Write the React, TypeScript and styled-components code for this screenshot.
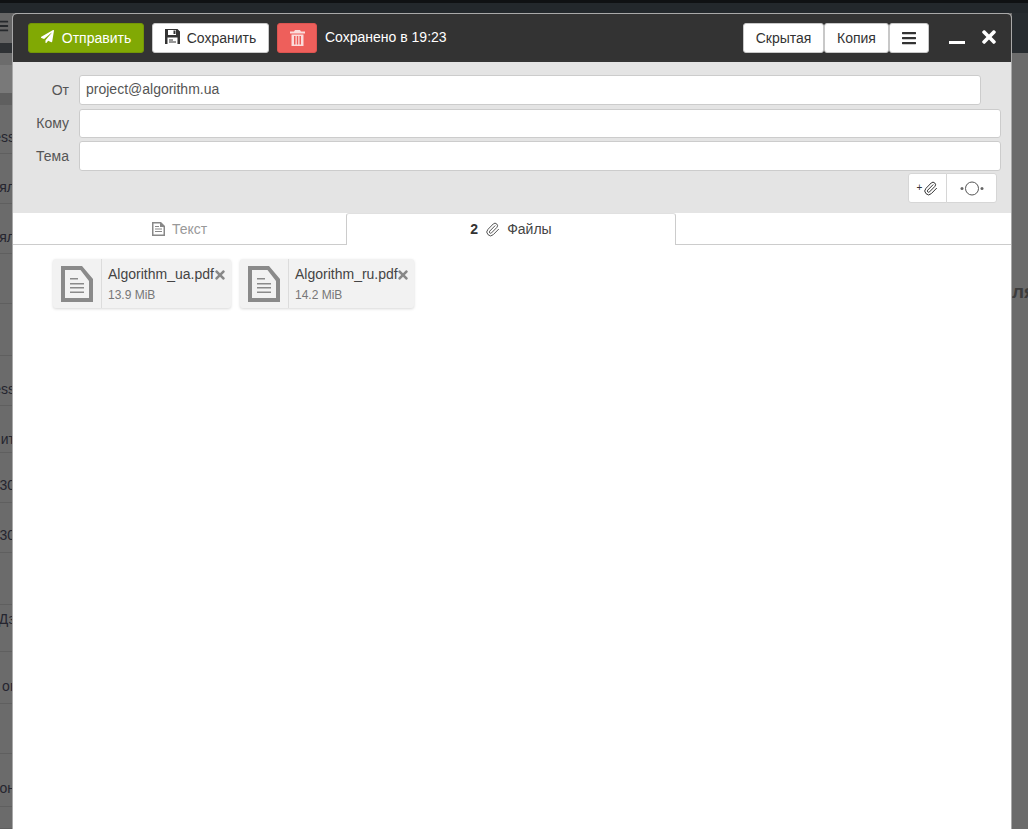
import React from "react";
import styled, { createGlobalStyle } from "styled-components";
import { FaPaperPlane, FaBars, FaTimes } from "react-icons/fa";
import { Paperclip } from "lucide-react";

const Global = createGlobalStyle`
  html, body { margin: 0; padding: 0; height: 100%; overflow: hidden; background: #6b6b6b; }
  * { box-sizing: border-box; }
  #root { font-family: "Liberation Sans", Arial, sans-serif; font-size: 14px; color: #333; }
`;

const Page = styled.div`
  display: grid;
  grid-template-columns: 12px 1000px 16px;
  width: 1028px;
  height: 829px;
  overflow: hidden;
`;

const TopBand = styled.div`
  grid-column: 1 / 4;
  height: 13px;
  background: #23282c;
  border-top: 3px solid #0f1113;
`;

const Strip = styled.div`
  display: flex;
  flex-direction: column;
  overflow: hidden;
  height: 816px;
  background: #6b6b6b;
`;

const StripHead = styled.div<{ $h: number; $bg: string }>`
  height: ${(p) => p.$h}px;
  background: ${(p) => p.$bg};
  flex: none;
  color: #26292c;
  display: flex;
  align-items: center;
  overflow: hidden;
`;

const StripRow = styled.div<{ $h: number; $pb: number }>`
  height: ${(p) => p.$h}px;
  flex: none;
  border-bottom: 1px solid #5f5f5f;
  display: flex;
  align-items: flex-end;
  justify-content: flex-end;
  padding-bottom: ${(p) => p.$pb}px;
  font-size: 14px;
  line-height: 16px;
  color: #25252f;
  white-space: nowrap;
  overflow: hidden;
`;

const StripText = styled.span`
  margin-right: -3px;
`;

const RightLabel = styled.div`
  margin-top: 228px;
  font-size: 19px;
  font-weight: 700;
  color: #3c3c3c;
  white-space: nowrap;
`;

const Modal = styled.div`
  height: 816px;
  background: #fff;
  border: 1px solid #a9a9a9;
  border-bottom: 0;
  border-radius: 5px 5px 0 0;
  display: flex;
  flex-direction: column;
  overflow: hidden;
`;

const Header = styled.div`
  height: 48px;
  background: #333;
  flex: none;
  display: flex;
  align-items: center;
  padding: 0 6px 0 15px;
`;

const Btn = styled.button<{ $w: number }>`
  width: ${(p) => p.$w}px;
  height: 30px;
  flex: none;
  border-radius: 3px;
  border: 1px solid #c8c8c8;
  background: #fff;
  color: #333;
  font: 14px "Liberation Sans", Arial, sans-serif;
  display: flex;
  align-items: center;
  justify-content: center;
  gap: 7px;
  padding: 0;
`;

const SendBtn = styled(Btn)`
  background: #81a904;
  border-color: #739606;
  color: #fff;
  margin-right: 8px;
  gap: 8px;
`;

const SendIcon = styled(FaPaperPlane)`
  margin-top: -3px;
`;

const SaveBtn = styled(Btn)`
  margin-right: 8px;
`;

const TrashBtn = styled(Btn)`
  background: #ee5f5b;
  border-color: #dd5450;
  margin-right: 8px;
`;

const Status = styled.span`
  color: #fff;
  font-size: 14px;
  flex: 1;
  margin-top: -2px;
`;

const HeadIcon = styled.button`
  width: 32px;
  flex: none;
  background: none;
  border: 0;
  padding: 0;
  color: #fff;
  display: flex;
  justify-content: center;
  align-items: center;
`;

const MinIcon = styled(HeadIcon)`
  margin-left: 12px;
`;

const CloseIcon = styled(FaTimes)`
  margin-top: -3px;
`;

const Dash = styled.span`
  display: block;
  width: 16px;
  height: 3px;
  background: #fff;
  margin-top: 9px;
`;

const Form = styled.div`
  height: 151px;
  flex: none;
  background: #e4e4e4;
  padding: 13px 10px 0 0;
  display: flex;
  flex-direction: column;
  gap: 3px;
`;

const FormRow = styled.div`
  display: flex;
  align-items: center;
  height: 30px;
`;

const Label = styled.label`
  width: 56px;
  text-align: right;
  color: #555;
  font-size: 14px;
  flex: none;
`;

const Input = styled.div<{ $narrow?: boolean; $short?: boolean }>`
  height: ${(p) => (p.$short ? 29 : 30)}px;
  margin-left: 10px;
  margin-top: ${(p) => (p.$short ? 1 : 0)}px;
  flex: 1;
  margin-right: ${(p) => (p.$narrow ? 20 : 0)}px;
  background: #fff;
  border: 1px solid #ccc;
  border-radius: 3px;
  padding: 0 6px;
  line-height: 27px;
  font-size: 14px;
  color: #555;
`;

const Tools = styled.div`
  display: flex;
  justify-content: flex-end;
  margin-top: -1px;
  padding-right: 4px;
`;

const ToolBtn = styled.button<{ $w: number; $left?: boolean }>`
  width: ${(p) => p.$w}px;
  height: 30px;
  background: #fff;
  border: 1px solid #d6d6d6;
  margin-left: -1px;
  border-radius: ${(p) => (p.$left ? "3px 0 0 3px" : "0 3px 3px 0")};
  padding: 0;
  display: flex;
  align-items: center;
  justify-content: center;
  color: #444;
`;

const Plus = styled.span`
  font-size: 10px;
  line-height: 10px;
  margin-right: 1px;
  color: #333;
`;

const Tabs = styled.div`
  height: 32px;
  flex: none;
  display: flex;
  border-bottom: 1px solid #ccc;
`;

const Tab = styled.div<{ $active?: boolean; $w: number }>`
  width: ${(p) => p.$w}px;
  height: ${(p) => (p.$active ? 32 : 31)}px;
  flex: none;
  display: flex;
  align-items: center;
  justify-content: center;
  gap: 7px;
  background: #fff;
  font-size: 14px;
  color: ${(p) => (p.$active ? "#444" : "#999")};
  ${(p) =>
    p.$active
      ? "border: 1px solid #ccc; border-bottom: 0; border-top-color: #e0e0e0; border-radius: 3px 3px 0 0; padding-bottom: 1px;"
      : ""}
`;

const Count = styled.b`
  color: #333;
  font-size: 14px;
`;

const Files = styled.div`
  display: flex;
  gap: 9px;
  padding: 14px 0 0 40px;
`;

const FileCard = styled.div<{ $w: number }>`
  width: ${(p) => p.$w}px;
  height: 49px;
  position: relative;
  background: #f2f2f2;
  border-radius: 3px;
  box-shadow: 0 1px 3px rgba(0, 0, 0, 0.16);
  display: flex;
`;

const FileThumb = styled.div`
  width: 49px;
  flex: none;
  border-right: 1px solid #dcdcdc;
  display: flex;
  align-items: center;
  justify-content: center;
`;

const FileInfo = styled.div`
  padding: 7px 0 0 6px;
  white-space: nowrap;
`;

const FileName = styled.div`
  font-size: 14px;
  line-height: 16px;
  color: #444;
`;

const FileSize = styled.div`
  font-size: 12px;
  line-height: 14px;
  margin-top: 6px;
  color: #777;
`;

const Remove = styled.span`
  position: absolute;
  right: 4px;
  top: 9px;
  color: #888;
  display: flex;
`;

const PdfIcon = () => (
  <svg width="32" height="36" viewBox="0 0 32 36">
    <path fillRule="evenodd" fill="#8a8a8a" d="M0 0H21L32 13V36H0ZM4 4V32H28V15L19.5 4Z" />
    <path fill="#8a8a8a" d="M9 12H17V13.5H9ZM9 17H23V18.5H9ZM9 21H23V22.5H9ZM9 25.5H23V27H9Z" />
  </svg>
);

const CircleIcon = () => (
  <svg width="26" height="16" viewBox="0 0 26 16" fill="none">
    <circle cx="13" cy="8.5" r="6.5" stroke="#555" strokeWidth="1" />
    <circle cx="3" cy="8.5" r="1.5" fill="#666" />
    <circle cx="23" cy="8.5" r="1.5" fill="#666" />
  </svg>
);

const FloppyIcon = () => (
  <svg width="15" height="15" viewBox="0 0 15 15" style={{ marginTop: -4 }}>
    <path
      fill="#333"
      fillRule="evenodd"
      d="M0 0H12.5L15 2.5V15H0ZM3 1V6H11V1ZM8.5 1.5H10.5V5H8.5ZM2.5 8.5V15H12.5V8.5Z"
    />
    <path fill="#333" d="M4 10.5H8V11.5H4ZM4 12.5H11V13.5H4Z" />
  </svg>
);

const TrashIcon = () => (
  <svg width="15" height="16" viewBox="0 0 15 16">
    <path
      fill="#fbdcdb"
      fillRule="evenodd"
      d="M5 0H10L11 1.5H15V3.5H0V1.5H4ZM1.5 4.5H13.5V16H1.5ZM4 6V14.5H5.5V6ZM6.8 6V14.5H8.2V6ZM9.5 6V14.5H11V6Z"
    />
  </svg>
);

const rows: [number, number, string][] = [
  [49, 8, "ess"], [50, 8, "Баял"], [50, 8, "Баял"], [50, 8, ""], [52, 8, ""],
  [50, 8, "ess"], [47, 5, "ит"], [50, 9, "30"], [50, 9, "30"], [52, 8, ""],
  [47, 24, "Дз"], [52, 9, "ог"], [50, 8, ""], [53, 10, "он"], [22, 8, ""],
];

const files = [
  { name: "Algorithm_ua.pdf", size: "13.9 MiB", w: 178 },
  { name: "Algorithm_ru.pdf", size: "14.2 MiB", w: 174 },
];

export default function App() {
  return (
    <Page>
      <Global />
      <TopBand />
      <Strip>
        <StripHead $h={30} $bg="#666666"><FaBars size={14} style={{ marginLeft: -5, marginTop: -4 }} /></StripHead>
        <StripHead $h={10} $bg="#2f3235" />
        <StripHead $h={12} $bg="#6c6c6c" />
        <StripHead $h={28} $bg="#797979" />
        <StripHead $h={12} $bg="#5f5f5f" />
        {rows.map(([h, pb, t], i) => (
          <StripRow key={i} $h={h} $pb={pb}><StripText>{t}</StripText></StripRow>
        ))}
      </Strip>
      <Modal>
        <Header>
          <SendBtn $w={116}><SendIcon size={13} />Отправить</SendBtn>
          <SaveBtn $w={117}><FloppyIcon />Сохранить</SaveBtn>
          <TrashBtn $w={40}><TrashIcon /></TrashBtn>
          <Status>Сохранено в 19:23</Status>
          <Btn $w={81}>Скрытая</Btn>
          <Btn $w={65}>Копия</Btn>
          <Btn $w={40}><FaBars size={16} /></Btn>
          <MinIcon><Dash /></MinIcon>
          <HeadIcon><CloseIcon size={20} /></HeadIcon>
        </Header>
        <Form>
          <FormRow><Label>От</Label><Input $narrow>project@algorithm.ua</Input></FormRow>
          <FormRow><Label>Кому</Label><Input $short /></FormRow>
          <FormRow><Label>Тема</Label><Input /></FormRow>
          <Tools>
            <ToolBtn $w={39} $left>
              <Plus>+</Plus>
              <Paperclip size={15} strokeWidth={1.6} color="#333" />
            </ToolBtn>
            <ToolBtn $w={51}><CircleIcon /></ToolBtn>
          </Tools>
        </Form>
        <Tabs>
          <Tab $w={333}>
            <svg width="13" height="14" viewBox="0 0 13 14" fill="none">
              <path fill="#888" fillRule="evenodd" d="M0 0H9L13 4V14H0ZM1.5 1.5V12.5H11.5V5H8V1.5Z" />
              <path fill="#888" d="M3 4H7V5H3ZM3 6.5H10V7.5H3ZM3 9H10V10H3Z" />
            </svg>
            Текст
          </Tab>
          <Tab $w={330} $active>
            <Count>2</Count>
            <Paperclip size={15} strokeWidth={1.6} color="#555" />
            Файлы
          </Tab>
        </Tabs>
        <Files>
          {files.map((f) => (
            <FileCard key={f.name} $w={f.w}>
              <FileThumb><PdfIcon /></FileThumb>
              <FileInfo>
                <FileName>{f.name}</FileName>
                <FileSize>{f.size}</FileSize>
              </FileInfo>
              <Remove><FaTimes size={14} /></Remove>
            </FileCard>
          ))}
        </Files>
      </Modal>
      <Strip>
        <StripHead $h={40} $bg="#272c30" />
        <RightLabel>ляя</RightLabel>
      </Strip>
    </Page>
  );
}
